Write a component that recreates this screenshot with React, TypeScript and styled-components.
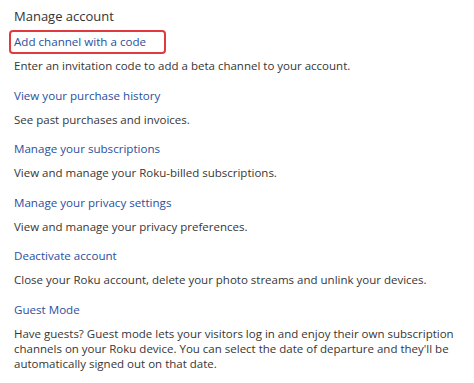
import styled, { createGlobalStyle } from "styled-components";

const GlobalStyle = createGlobalStyle`
  html, body {
    margin: 0;
    background: #ffffff;
  }
  body {
    font-family: "Open Sans", "Liberation Sans", sans-serif;
  }
`;

const Page = styled.div`
  width: 474px;
  height: 383px;
  box-sizing: border-box;
  padding: 7px 8px 0 14px;
  display: flex;
  flex-direction: column;
  gap: 12.5px;
  overflow: hidden;
`;

const Heading = styled.h2`
  margin: 0 0 -6.5px 0;
  font-size: 13px;
  line-height: 19px;
  font-weight: 400;
  color: #333333;
`;

const Section = styled.div`
  display: flex;
  flex-direction: column;
  gap: 6px;
`;

const LinkText = styled.a`
  display: block;
  font-size: 11.6px;
  line-height: 20px;
  color: #2b4f9e;
  text-decoration: none;
  cursor: pointer;
`;

// red annotation box round the first link; negative margins keep the flow
const Highlight = styled.div`
  align-self: flex-start;
  margin: -2px 0 -2px -5.5px;
  padding: 1px 18px 1px 3.5px;
  border: 2px solid #e03a3e;
  border-radius: 4px;

  ${LinkText} {
    line-height: 18px;
  }
`;

const Desc = styled.p`
  margin: 0;
  font-size: 11.5px;
  line-height: 15px;
  color: #363636;
`;

interface IItem {
  title: string;
  text: string;
  highlighted?: boolean;
}

const items: Array<IItem> = [
  {
    title: "Add channel with a code",
    text: "Enter an invitation code to add a beta channel to your account.",
    highlighted: true,
  },
  {
    title: "View your purchase history",
    text: "See past purchases and invoices.",
  },
  {
    title: "Manage your subscriptions",
    text: "View and manage your Roku-billed subscriptions.",
  },
  {
    title: "Manage your privacy settings",
    text: "View and manage your privacy preferences.",
  },
  {
    title: "Deactivate account",
    text: "Close your Roku account, delete your photo streams and unlink your devices.",
  },
  {
    title: "Guest Mode",
    text: "Have guests? Guest mode lets your visitors log in and enjoy their own subscription channels on your Roku device. You can select the date of departure and they'll be automatically signed out on that date.",
  },
];

function App() {
  return (
    <>
      <GlobalStyle />
      <Page>
        <Heading>Manage account</Heading>
        {items.map((item) => (
          <Section key={item.title}>
            {item.highlighted ? (
              <Highlight>
                <LinkText>{item.title}</LinkText>
              </Highlight>
            ) : (
              <LinkText>{item.title}</LinkText>
            )}
            <Desc>{item.text}</Desc>
          </Section>
        ))}
      </Page>
    </>
  );
}

export default App;
